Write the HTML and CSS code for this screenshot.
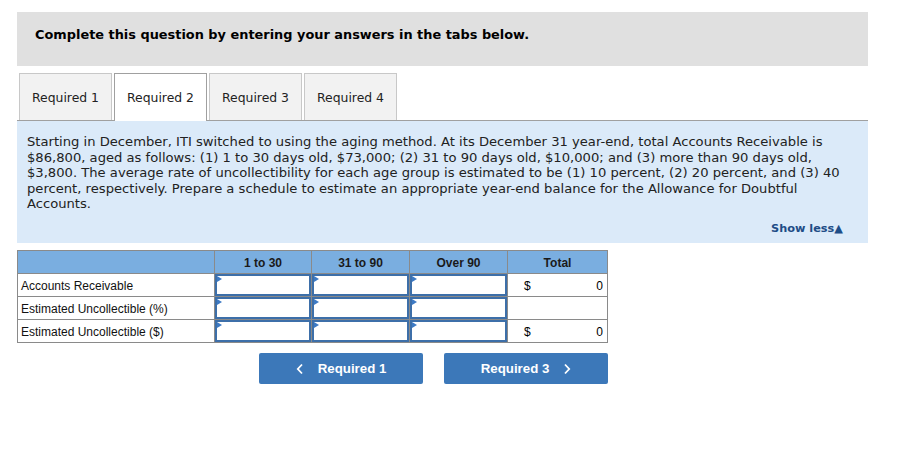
FILE: index.html
```html
<!DOCTYPE html>
<html lang="en">
<head>
  <meta charset="UTF-8" />
  <meta name="viewport" content="width=device-width, initial-scale=1.0"/>
  <title>Required 2</title>
  <link rel="stylesheet" href="styles.css">
</head>
<body>

  <!-- Instruction bar -->
  <div class="intro">
    <p>Complete this question by entering your answers in the tabs below.</p>
  </div>

  <!-- Tabs for each requirement -->
  <div class="tabs">
    <a href="#" class="tab">Required 1</a>
    <a href="#" class="tab active">Required 2</a>
    <a href="#" class="tab">Required 3</a>
    <a href="#" class="tab">Required 4</a>
  </div>

  <!-- Question text -->
  <div class="question">
    <p>Starting in December, ITI switched to using the aging method. At its December 31 year-end, total Accounts Receivable is $86,800, aged as follows: (1) 1 to 30 days old, $73,000; (2) 31 to 90 days old, $10,000; and (3) more than 90 days old, $3,800. The average rate of uncollectibility for each age group is estimated to be (1) 10 percent, (2) 20 percent, and (3) 40 percent, respectively. Prepare a schedule to estimate an appropriate year-end balance for the Allowance for Doubtful Accounts.</p>
    <div class="show-less">Show less&#9650;</div>
  </div>

  <!-- Answer schedule -->
  <table class="schedule">
    <tr>
      <th class="label-col"></th>
      <th class="col-a">1 to 30</th>
      <th class="col-b">31 to 90</th>
      <th class="col-b">Over 90</th>
      <th class="total-col">Total</th>
    </tr>
    <tr>
      <td class="label">Accounts Receivable</td>
      <td class="entry"><input type="text"></td>
      <td class="entry"><input type="text"></td>
      <td class="entry"><input type="text"></td>
      <td class="total"><span>$</span><span>0</span></td>
    </tr>
    <tr>
      <td class="label">Estimated Uncollectible (%)</td>
      <td class="entry"><input type="text"></td>
      <td class="entry"><input type="text"></td>
      <td class="entry"><input type="text"></td>
      <td class="total"></td>
    </tr>
    <tr>
      <td class="label">Estimated Uncollectible ($)</td>
      <td class="entry"><input type="text"></td>
      <td class="entry"><input type="text"></td>
      <td class="entry"><input type="text"></td>
      <td class="total"><span>$</span><span>0</span></td>
    </tr>
  </table>

  <!-- Previous / next buttons -->
  <div class="nav-buttons">
    <a href="#" class="nav-btn">
      <svg width="8" height="12" viewBox="0 0 8 12"><path d="M6 1.5 L1.8 6 L6 10.5" fill="none" stroke="white" stroke-width="1.8"/></svg>
      Required 1
    </a>
    <a href="#" class="nav-btn">
      Required 3
      <svg width="8" height="12" viewBox="0 0 8 12"><path d="M2 1.5 L6.2 6 L2 10.5" fill="none" stroke="white" stroke-width="1.8"/></svg>
    </a>
  </div>

</body>
</html>
```

FILE: styles.css
```css
/* Whole page */
body {
  margin: 0;
  padding: 12px 0 0 17px;
  background-color: white;
  color: black;
  font-family: "DejaVu Sans", Verdana, sans-serif;
  font-size: 13px;
}

p {
  margin: 0;
}

/* Grey instruction bar */
.intro {
  width: 851px;
  height: 54px;
  box-sizing: border-box;
  background-color: #e0e0e0;
  padding: 15px 18px;
}

.intro p {
  font-weight: bold;
  font-size: 12.9px;
  line-height: 16px;
}

/* Tabs row */
.tabs {
  display: flex;
  gap: 2px;
  width: 851px;
  margin-top: 7px;
  padding-left: 2px;
  box-sizing: border-box;
  border-bottom: 1px solid #a0a0a0;
}

.tab {
  width: 93px;
  height: 47px;
  box-sizing: border-box;
  display: flex;
  align-items: center;
  justify-content: center;
  background-color: #f2f2f2;
  border: 1px solid #c8c8c8;
  border-bottom: none;
  color: #222;
  text-decoration: none;
  font-size: 12.4px;
}

.tab.active {
  background-color: white;
  border-color: #a0a0a0;
  margin-bottom: -1px;
  height: 48px;
}

/* Blue question panel */
.question {
  width: 851px;
  height: 122px;
  box-sizing: border-box;
  background-color: #dbeaf9;
  padding: 13px 25px 0 10px;
}

.question p {
  font-size: 13.13px;
  line-height: 15.6px;
  color: #222;
  margin-right: -14px;
}

.show-less {
  text-align: right;
  margin-top: 10px;
  font-weight: bold;
  font-size: 11.3px;
  color: #1e4d87;
}

/* Schedule table */
.schedule {
  margin-top: 7px;
  border-collapse: collapse;
  table-layout: fixed;
  font-family: "Liberation Sans", Arial, sans-serif;
  font-size: 12px;
}

.schedule th,
.schedule td {
  border: 1px solid #8a8a8a;
  padding: 0;
}

.schedule th {
  background-color: #7aaee0;
  height: 21px;
  padding-top: 1px;
  font-weight: bold;
  color: #1a1a1a;
}

.schedule th.label-col {
  width: 196px;
}

.schedule th.col-a {
  width: 96px;
}

.schedule th.col-b {
  width: 97px;
}

.schedule th.total-col {
  width: 99px;
}

.schedule td {
  height: 21px;
}

.schedule td.label {
  padding: 1px 0 0 3px;
  color: #111;
}

.schedule td.entry {
  position: relative;
}

.schedule td.entry input {
  display: block;
  width: 100%;
  height: 22px;
  box-sizing: border-box;
  margin: 0;
  border: 2px solid #3d6fa9;
  background: white;
  outline: none;
}

/* small marker in the corner of each entry box */
.schedule td.entry::before {
  content: "";
  position: absolute;
  top: 2px;
  left: 2px;
  border-left: 5px solid #3d7ac4;
  border-top: 3px solid transparent;
  border-bottom: 3px solid transparent;
}

.schedule td.total {
  padding: 1px 4px 0 16px;
}

.schedule td.total span:first-child {
  float: left;
}

.schedule td.total span:last-child {
  float: right;
}

/* Previous / next buttons */
.nav-buttons {
  display: flex;
  gap: 21px;
  margin: 10px 0 0 242px;
}

.nav-btn {
  width: 164px;
  height: 31px;
  display: flex;
  align-items: center;
  justify-content: center;
  gap: 14px;
  background-color: #3c78b9;
  border-radius: 2px;
  color: white;
  text-decoration: none;
  font-family: "Liberation Sans", Arial, sans-serif;
  font-weight: bold;
  font-size: 13.3px;
}
```
